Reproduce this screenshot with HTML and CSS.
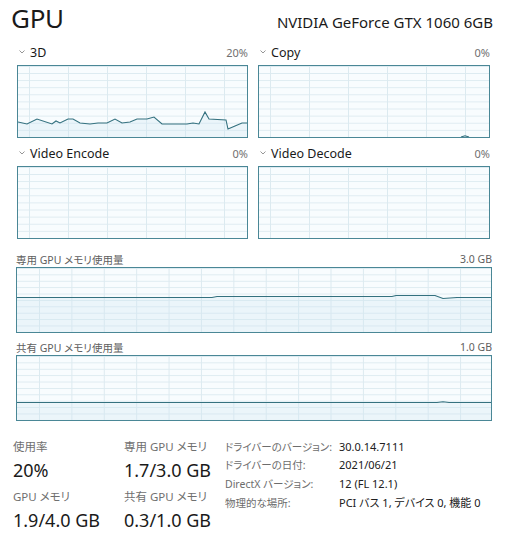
FILE: index.html
```html
<!DOCTYPE html>
<html lang="ja">
<head>
    <meta charset="UTF-8">
    <title>GPU</title>
    <link rel="stylesheet" href="styles.css">
</head>
<body>

<div class="page">
    <div class="head">
        <h1>GPU</h1>
        <div class="model">NVIDIA GeForce GTX 1060 6GB</div>
    </div>

    <div class="engines">
        <div class="engine">
            <div class="label">
                <span class="name"><svg class="chev" width="6" height="4" viewBox="0 0 6 4"><polyline points="0.5,0.5 3,3 5.5,0.5"/></svg>3D</span>
                <span class="pct">20%</span>
            </div>
            <div class="chart small">
                <svg viewBox="0 0 229 71" preserveAspectRatio="none">
                    <polygon class="fill" points="0,56 9,58 19,53 34,58 38,55 42,57 50,53 55,53 62,57 72,58 80,57 89,57 97,53 104,57 112,56 119,53 129,53 136,51 144,58 169,58 175,57 181,58 187,46 191,53 208,54 210,63 217,60 224,57 229,57 229,71 0,71"/>
                    <polyline class="line" points="0,56 9,58 19,53 34,58 38,55 42,57 50,53 55,53 62,57 72,58 80,57 89,57 97,53 104,57 112,56 119,53 129,53 136,51 144,58 169,58 175,57 181,58 187,46 191,53 208,54 210,63 217,60 224,57 229,57"/>
                </svg>
            </div>
        </div>
        <div class="engine">
            <div class="label">
                <span class="name"><svg class="chev" width="6" height="4" viewBox="0 0 6 4"><polyline points="0.5,0.5 3,3 5.5,0.5"/></svg>Copy</span>
                <span class="pct">0%</span>
            </div>
            <div class="chart small">
                <svg viewBox="0 0 230 71" preserveAspectRatio="none">
                    <polyline class="line" points="202,71 206,69.8 210,71"/>
                </svg>
            </div>
        </div>
        <div class="engine">
            <div class="label">
                <span class="name"><svg class="chev" width="6" height="4" viewBox="0 0 6 4"><polyline points="0.5,0.5 3,3 5.5,0.5"/></svg>Video Encode</span>
                <span class="pct">0%</span>
            </div>
            <div class="chart small"></div>
        </div>
        <div class="engine">
            <div class="label">
                <span class="name"><svg class="chev" width="6" height="4" viewBox="0 0 6 4"><polyline points="0.5,0.5 3,3 5.5,0.5"/></svg>Video Decode</span>
                <span class="pct">0%</span>
            </div>
            <div class="chart small"></div>
        </div>
    </div>

    <div class="mem dedicated">
        <div class="label mem-label">
            <span>専用 GPU メモリ使用量</span>
            <span>3.0 GB</span>
        </div>
        <div class="chart wide">
            <svg viewBox="0 0 474 64" preserveAspectRatio="none">
                <polygon class="fill" points="0,29.5 195,29.5 200,28.5 375,28.5 379,27.5 418,27.5 426,30.5 440,29.5 474,29.5 474,64 0,64"/>
                <polyline class="line" points="0,29.5 195,29.5 200,28.5 375,28.5 379,27.5 418,27.5 426,30.5 440,29.5 474,29.5"/>
            </svg>
        </div>
    </div>

    <div class="mem shared">
        <div class="label mem-label">
            <span>共有 GPU メモリ使用量</span>
            <span>1.0 GB</span>
        </div>
        <div class="chart wide">
            <svg viewBox="0 0 474 64" preserveAspectRatio="none">
                <polygon class="fill" points="0,46.5 420,46.5 426,45.8 432,46.5 474,46.5 474,64 0,64"/>
                <polyline class="line" points="0,46.5 420,46.5 426,45.8 432,46.5 474,46.5"/>
            </svg>
        </div>
    </div>

    <div class="stats">
        <div class="stat-col first">
            <div class="stat-label">使用率</div>
            <div class="stat-value">20%</div>
            <div class="stat-label">GPU メモリ</div>
            <div class="stat-value">1.9/4.0 GB</div>
        </div>
        <div class="stat-col second">
            <div class="stat-label">専用 GPU メモリ</div>
            <div class="stat-value">1.7/3.0 GB</div>
            <div class="stat-label">共有 GPU メモリ</div>
            <div class="stat-value">0.3/1.0 GB</div>
        </div>
        <div class="props">
            <span class="prop-name">ドライバーのバージョン:</span><span class="prop-value">30.0.14.7111</span>
            <span class="prop-name">ドライバーの日付:</span><span class="prop-value">2021/06/21</span>
            <span class="prop-name">DirectX バージョン:</span><span class="prop-value">12 (FL 12.1)</span>
            <span class="prop-name">物理的な場所:</span><span class="prop-value">PCI バス 1, デバイス 0, 機能 0</span>
        </div>
    </div>
</div>

</body>
</html>
```

FILE: styles.css
```css
body {
    margin: 0;
    background-color: #fff;
    color: #1a1a1a;
    font-family: "Noto Sans", "Noto Sans CJK JP", sans-serif;
    font-feature-settings: "palt";
}
.page {
    width: 511px;
    height: 538px;
    overflow: hidden;
}
.head {
    display: flex;
    justify-content: space-between;
    align-items: baseline;
    height: 42px;
    padding: 0 18px 0 11px;
}
h1 {
    margin: 0;
    font-size: 26px;
    font-weight: 400;
    line-height: 37px;
    letter-spacing: -0.3px;
}
.model {
    font-size: 15px;
}

/* graphes des moteurs */
.engines {
    display: grid;
    grid-template-columns: 231px 232px;
    column-gap: 10px;
    row-gap: 5px;
    padding-left: 17px;
}
.label {
    display: flex;
    justify-content: space-between;
    align-items: center;
    height: 20px;
    margin-bottom: 3px;
}
.name {
    display: flex;
    align-items: center;
    font-size: 12.5px;
}
.chev {
    margin: 0 5px 0 2px;
}
.chev polyline {
    fill: none;
    stroke: #8a8a8a;
    stroke-width: 0.9;
}
.pct {
    font-size: 11px;
    color: #707070;
}
.chart {
    box-sizing: border-box;
    border: 1px solid #4a8796;
    background-color: #f8fcfe;
    background-image:
        linear-gradient(to bottom, #dceaf0 1px, transparent 1px),
        linear-gradient(to right, #dceaf0 1px, transparent 1px);
}
.chart svg {
    display: block;
    width: 100%;
    height: 100%;
}
.small {
    height: 73px;
    background-size: 100% 7.1px, 39px 100%;
    background-position: 0 0, 11px 0;
}
.wide {
    height: 66px;
    width: 476px;
    background-size: 100% 6.4px, 32.4px 100%;
    background-position: 0 0, 22px 0;
}
.fill {
    fill: rgba(205, 230, 242, 0.3);
}
.line {
    fill: none;
    stroke: #34717f;
    stroke-width: 1.1;
    vector-effect: non-scaling-stroke;
}

/* memoire */
.mem {
    padding-left: 16px;
}
.dedicated {
    margin-top: 12px;
}
.shared {
    margin-top: 6px;
}
.mem-label {
    width: 476px;
    height: 16px;
    margin-bottom: 0;
    font-size: 10.5px;
    color: #606060;
}

/* statistiques */
.stats {
    display: flex;
    margin-top: 16px;
    padding-left: 13px;
}
.stat-col {
    padding-top: 2px;
}
.stat-col.first {
    width: 111px;
}
.stat-col.second {
    width: 101px;
}
.stat-label {
    font-size: 11.5px;
    line-height: 16px;
    color: #707070;
}
.stat-value {
    font-size: 18px;
    line-height: 26px;
    margin-top: 2px;
    margin-bottom: 6px;
}
.props {
    display: grid;
    grid-template-columns: 114px auto;
    grid-auto-rows: 18.6px;
    align-items: center;
    font-size: 11px;
}
.prop-name {
    font-size: 10.5px;
    color: #6d6d6d;
}
.prop-value {
    color: #202020;
}
```
